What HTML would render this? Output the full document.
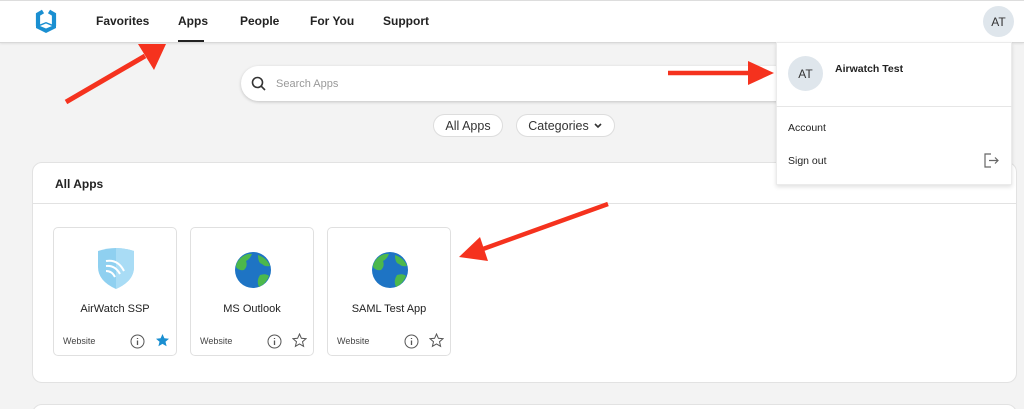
<!DOCTYPE html><html><head><style>
*{margin:0;padding:0;box-sizing:border-box}
html,body{width:1024px;height:409px;overflow:hidden}
body{background:#f3f3f3;font-family:"Liberation Sans",sans-serif;position:relative;color:#222}
.a{position:absolute}
.hdr{left:0;top:0;width:1024px;height:43px;background:#fff;border-top:1px solid #ddd;border-bottom:1px solid #d8d8d8;box-shadow:0 1px 2px rgba(0,0,0,.08)}
.nav{top:14px;font-size:12px;font-weight:bold;color:#222}
.av{border-radius:50%;background:#dfe6ec;color:#333;display:flex;align-items:center;justify-content:center}
.pill{background:#fff;border:1px solid #ddd;border-radius:12px;font-size:12.5px;color:#333;display:flex;align-items:center;justify-content:center}
.card{background:#fff;border:1px solid #e2e2e2;border-radius:10px}
.tile{background:#fff;border:1px solid #e0e0e0;border-radius:5px;width:124px;height:129px;top:227px}
.tile .n{position:absolute;top:75px;width:100%;text-align:center;font-size:11px;color:#222}
.tile .w{position:absolute;left:9px;top:108px;font-size:9px;color:#444}
.tile svg.ic{position:absolute}
</style></head><body>
<div class="a hdr"></div>
<svg class="a" style="left:34px;top:9px" width="24" height="25" viewBox="0 0 24 25"><path d="M9 2.5L4 5.5V17" fill="none" stroke="#1a8fd1" stroke-width="4.2"/><path d="M15 2.5L20 5.5V17" fill="none" stroke="#1a8fd1" stroke-width="4.2"/><path d="M2 17L12 23L22 17L12 19Z" fill="#1a8fd1"/><path d="M2 17L12 13L22 17L22 19L12 24L2 19Z" fill="#1a8fd1"/><path d="M6 17L12 14.5L18 17L12 19.5Z" fill="#fff"/></svg>
<div class="a nav" style="left:96px">Favorites</div>
<div class="a nav" style="left:178px">Apps</div>
<div class="a" style="left:178px;top:40px;width:26px;height:2px;background:#222"></div>
<div class="a nav" style="left:240px">People</div>
<div class="a nav" style="left:310px">For You</div>
<div class="a nav" style="left:383px">Support</div>
<div class="a av" style="left:983px;top:6px;width:31px;height:31px;font-size:12px">AT</div>

<div class="a" style="left:241px;top:66px;width:580px;height:35px;background:#fff;border-radius:18px;box-shadow:0 1px 3px rgba(0,0,0,.2)"></div>
<svg class="a" style="left:251px;top:76px" width="16" height="16" viewBox="0 0 16 16"><circle cx="6.5" cy="6.5" r="5" fill="none" stroke="#333" stroke-width="1.6"/><path d="M10.2 10.2L14 14" stroke="#333" stroke-width="1.6"/></svg>
<div class="a" style="left:276px;top:78px;font-size:11px;color:#999">Search Apps</div>
<div class="a pill" style="left:433px;top:114px;width:70px;height:23px">All Apps</div>
<div class="a pill" style="left:516px;top:114px;width:99px;height:23px">Categories <svg width="10" height="8" style="margin-left:4px" viewBox="0 0 10 8"><path d="M2 2L5 5L8 2" fill="none" stroke="#333" stroke-width="1.6"/></svg></div>

<div class="a card" style="left:32px;top:162px;width:985px;height:221px"></div>
<div class="a" style="left:55px;top:177px;font-size:12px;font-weight:bold">All Apps</div>
<div class="a" style="left:33px;top:203px;width:983px;height:1px;background:#e2e2e2"></div>
<div class="a card" style="left:32px;top:404px;width:985px;height:20px"></div>

<div class="a tile" style="left:53px">
<svg class="ic" style="left:42px;top:19px" width="40" height="44" viewBox="0 0 40 44"><path d="M2 4Q20 -2 38 4V20Q38 34 20 42Q2 34 2 20Z" fill="#8fd0f0"/><path d="M20 1Q29 1 38 4V20Q38 34 20 42Z" fill="#a9dcf5"/><path d="M10 14Q22 12 28 24M10 19Q19 18 24 27M10 24Q16 24 19 30" fill="none" stroke="#fff" stroke-width="2"/></svg>
<div class="n">AirWatch SSP</div><div class="w">Website</div>
<svg class="ic" style="left:76px;top:106px" width="15" height="15" viewBox="0 0 15 15"><circle cx="7.5" cy="7.5" r="6.5" fill="none" stroke="#555"/><path d="M7.5 6.5V11M7.5 4V5" stroke="#555" stroke-width="1.3"/></svg>
<svg class="ic" style="left:101px;top:105px" width="15" height="15" viewBox="0 0 15 15"><path d="M7.5 1L9.4 5.3L14 5.7L10.5 8.7L11.6 13.3L7.5 10.9L3.4 13.3L4.5 8.7L1 5.7L5.6 5.3Z" fill="#1a8fd1"/></svg>
</div>
<div class="a tile" style="left:190px">
<svg class="ic" style="left:43px;top:23px" width="38" height="38" viewBox="0 0 38 38"><circle cx="19" cy="19" r="18" fill="#1e74c4"/><path d="M4 10Q10 2 18 3Q16 8 12 10Q14 15 10 19Q5 20 2 16Q2 13 4 10Z" fill="#4cb84c"/><path d="M24 4Q33 7 36 15Q31 16 28 13Q24 12 24 4Z" fill="#4cb84c"/><path d="M26 24Q32 22 35 25Q32 33 25 36Q22 30 26 24Z" fill="#4cb84c"/></svg>
<div class="n">MS Outlook</div><div class="w">Website</div>
<svg class="ic" style="left:76px;top:106px" width="15" height="15" viewBox="0 0 15 15"><circle cx="7.5" cy="7.5" r="6.5" fill="none" stroke="#555"/><path d="M7.5 6.5V11M7.5 4V5" stroke="#555" stroke-width="1.3"/></svg>
<svg class="ic" style="left:101px;top:105px" width="15" height="15" viewBox="0 0 15 15"><path d="M7.5 1L9.4 5.3L14 5.7L10.5 8.7L11.6 13.3L7.5 10.9L3.4 13.3L4.5 8.7L1 5.7L5.6 5.3Z" fill="none" stroke="#555"/></svg>
</div>
<div class="a tile" style="left:327px">
<svg class="ic" style="left:43px;top:23px" width="38" height="38" viewBox="0 0 38 38"><circle cx="19" cy="19" r="18" fill="#1e74c4"/><path d="M4 10Q10 2 18 3Q16 8 12 10Q14 15 10 19Q5 20 2 16Q2 13 4 10Z" fill="#4cb84c"/><path d="M24 4Q33 7 36 15Q31 16 28 13Q24 12 24 4Z" fill="#4cb84c"/><path d="M26 24Q32 22 35 25Q32 33 25 36Q22 30 26 24Z" fill="#4cb84c"/></svg>
<div class="n">SAML Test App</div><div class="w">Website</div>
<svg class="ic" style="left:76px;top:106px" width="15" height="15" viewBox="0 0 15 15"><circle cx="7.5" cy="7.5" r="6.5" fill="none" stroke="#555"/><path d="M7.5 6.5V11M7.5 4V5" stroke="#555" stroke-width="1.3"/></svg>
<svg class="ic" style="left:101px;top:105px" width="15" height="15" viewBox="0 0 15 15"><path d="M7.5 1L9.4 5.3L14 5.7L10.5 8.7L11.6 13.3L7.5 10.9L3.4 13.3L4.5 8.7L1 5.7L5.6 5.3Z" fill="none" stroke="#555"/></svg>
</div>

<div class="a" style="left:776px;top:42px;width:236px;height:143px;background:#fff;border:1px solid #ebebeb;box-shadow:0 2px 4px rgba(0,0,0,.12)"></div>
<div class="a av" style="left:788px;top:56px;width:35px;height:35px;font-size:12px">AT</div>
<div class="a" style="left:835px;top:63px;font-size:10.5px;font-weight:bold">Airwatch Test</div>
<div class="a" style="left:776px;top:106px;width:236px;height:1px;background:#e6e6e6"></div>
<div class="a" style="left:788px;top:122px;font-size:10.5px">Account</div>
<div class="a" style="left:788px;top:155px;font-size:10.5px">Sign out</div>
<svg class="a" style="left:983px;top:153px" width="17" height="15" viewBox="0 0 17 15"><path d="M8 1H2V14H8" fill="none" stroke="#666" stroke-width="1.2"/><path d="M6 7.5H15M12 4.5L15 7.5L12 10.5" fill="none" stroke="#666" stroke-width="1.2"/></svg>

<svg class="a" style="left:0;top:0" width="1024" height="409">
<g fill="#f5321e" stroke="#f5321e">
<line x1="66" y1="102" x2="145" y2="56" stroke-width="5"/><path d="M166 44L138 44L154 70Z" stroke="none"/>
<line x1="668" y1="73" x2="748" y2="73" stroke-width="4.5"/><path d="M774 73L748 61L748 85Z" stroke="none"/>
<line x1="608" y1="204" x2="483" y2="249" stroke-width="4.5"/><path d="M459 257L480 237L488 261Z" stroke="none"/>
</g></svg>
</body></html>
